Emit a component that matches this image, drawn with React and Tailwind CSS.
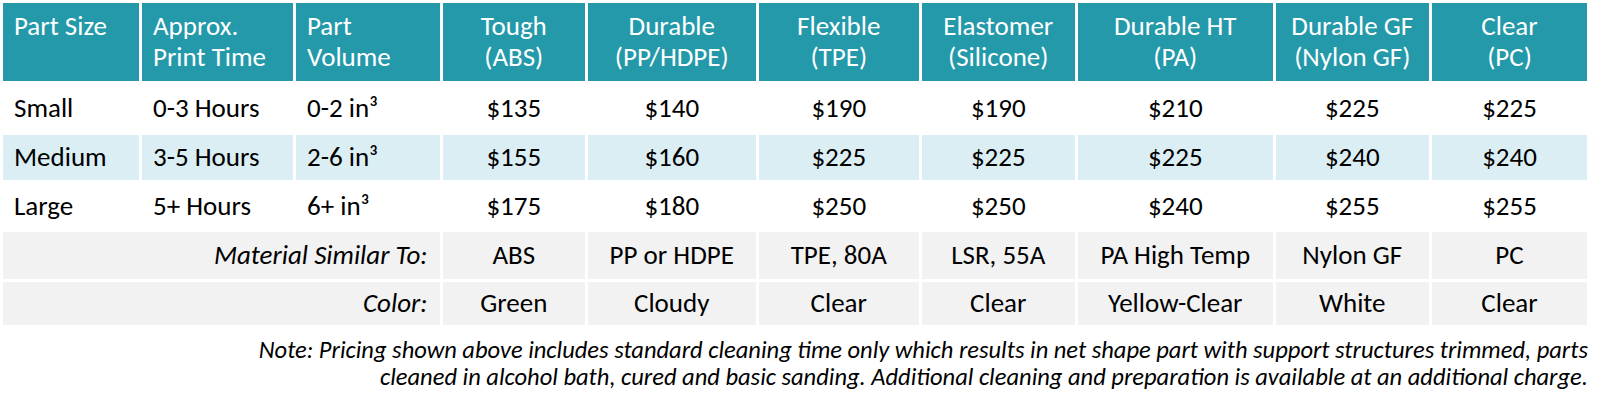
import React from 'react';

const cols = 'grid-cols-[135.5px_150.5px_143.5px_141.5px_167.5px_159.5px_152.5px_194.5px_152.5px_155px]';

const headers = [
  { lines: ['Part Size'], left: true },
  { lines: ['Approx.', 'Print Time'], left: true },
  { lines: ['Part', 'Volume'], left: true },
  { lines: ['Tough', '(ABS)'] },
  { lines: ['Durable', '(PP/HDPE)'] },
  { lines: ['Flexible', '(TPE)'] },
  { lines: ['Elastomer', '(Silicone)'] },
  { lines: ['Durable HT', '(PA)'] },
  { lines: ['Durable GF', '(Nylon GF)'] },
  { lines: ['Clear', '(PC)'] },
];

const sizes = [
  { name: 'Small', time: '0-3 Hours', vol: '0-2 in³', prices: ['$135', '$140', '$190', '$190', '$210', '$225', '$225'], bg: 'bg-white', h: 'h-[48px]' },
  { name: 'Medium', time: '3-5 Hours', vol: '2-6 in³', prices: ['$155', '$160', '$225', '$225', '$225', '$240', '$240'], bg: 'bg-[#dbeef4]', h: 'h-[45px]' },
  { name: 'Large', time: '5+ Hours', vol: '6+ in³', prices: ['$175', '$180', '$250', '$250', '$240', '$255', '$255'], bg: 'bg-white', h: 'h-[46px]' },
];

const extras = [
  { label: 'Material Similar To:', values: ['ABS', 'PP or HDPE', 'TPE, 80A', 'LSR, 55A', 'PA High Temp', 'Nylon GF', 'PC'], h: 'h-[47px]' },
  { label: 'Color:', values: ['Green', 'Cloudy', 'Clear', 'Clear', 'Yellow-Clear', 'White', 'Clear'], h: 'h-[43px]' },
];

export default function App() {
  return (
    <div className="w-[1600px] h-[404px] bg-white text-black font-['Carlito','Lato',sans-serif] text-[27px] pt-[3px] pl-[3px]">
      {/* pricing grid */}
      <div className={`grid ${cols} gap-x-[3.5px] gap-y-[3px] w-[1584px]`}>
        {headers.map((hd, i) => (
          <div
            key={i}
            className={`h-[78px] bg-[#2399aa] text-white leading-[31px] pt-[7px] flex flex-col ${hd.left ? 'items-start pl-[11px]' : 'items-center'}`}
          >
            {hd.lines.map((l) => (
              <span key={l}>{l}</span>
            ))}
          </div>
        ))}

        {sizes.map((r) => (
          <React.Fragment key={r.name}>
            <div className={`${r.bg} ${r.h} flex items-center pl-[11px]`}>{r.name}</div>
            <div className={`${r.bg} ${r.h} flex items-center pl-[11px]`}>{r.time}</div>
            <div className={`${r.bg} ${r.h} flex items-center pl-[11px]`}>{r.vol}</div>
            {r.prices.map((p, j) => (
              <div key={j} className={`${r.bg} ${r.h} flex items-center justify-center`}>{p}</div>
            ))}
          </React.Fragment>
        ))}

        {extras.map((r) => (
          <React.Fragment key={r.label}>
            <div className={`col-span-3 bg-[#f2f2f2] ${r.h} flex items-center justify-end pr-[12px] italic`}>{r.label}</div>
            {r.values.map((v, j) => (
              <div key={j} className={`bg-[#f2f2f2] ${r.h} flex items-center justify-center`}>{v}</div>
            ))}
          </React.Fragment>
        ))}
      </div>

      {/* footnote */}
      <p className="w-[1585px] text-right italic text-[24.5px] leading-[27px] mt-[12px]">
        Note: Pricing shown above includes standard cleaning time only which results in net shape part with support structures trimmed, parts
        <br />
        cleaned in alcohol bath, cured and basic sanding. Additional cleaning and preparation is available at an additional charge.
      </p>
    </div>
  );
}
